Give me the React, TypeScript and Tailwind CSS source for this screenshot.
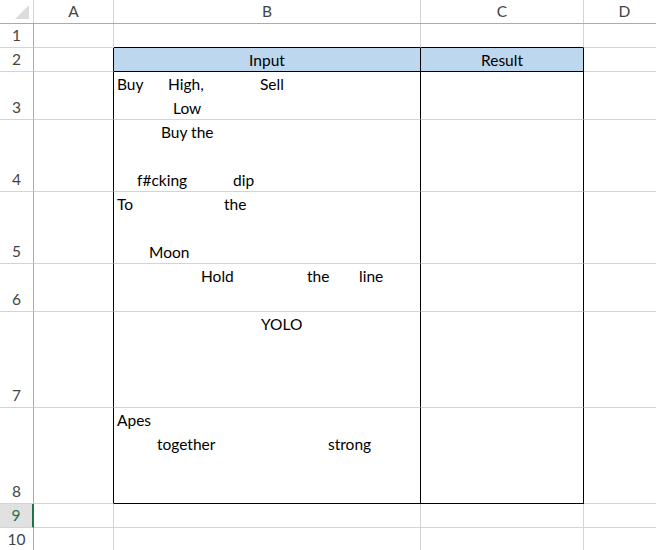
import React from 'react';

type Line = { pl: string; words: { text: string; w: string }[] };

const wcls: Record<string, string> = {
    '51': 'w-[51px]',
    '92': 'w-[92px]',
    '96': 'w-[96px]',
    '106': 'w-[106px]',
    '52': 'w-[52px]',
    '171': 'w-[171px]',
    '107': 'w-[107px]',
    '0': '',
};

const rows = [
    { n: 1, h: 'h-6', lines: [] as Line[] },
    { n: 2, h: 'h-6', lines: [] as Line[], header: true },
    {
        n: 3, h: 'h-12', lines: [
            { pl: 'pl-[3px]', words: [{ text: 'Buy', w: '51' }, { text: 'High,', w: '92' }, { text: 'Sell', w: '0' }] },
            { pl: 'pl-[59px]', words: [{ text: 'Low', w: '0' }] },
        ]
    },
    {
        n: 4, h: 'h-[72px]', lines: [
            { pl: 'pl-[47px]', words: [{ text: 'Buy the', w: '0' }] },
            { pl: '', words: [] },
            { pl: 'pl-[23px]', words: [{ text: 'f#cking', w: '96' }, { text: 'dip', w: '0' }] },
        ]
    },
    {
        n: 5, h: 'h-[72px]', lines: [
            { pl: 'pl-[3px]', words: [{ text: 'To', w: '107' }, { text: 'the', w: '0' }] },
            { pl: '', words: [] },
            { pl: 'pl-[35px]', words: [{ text: 'Moon', w: '0' }] },
        ]
    },
    {
        n: 6, h: 'h-12', lines: [
            { pl: 'pl-[87px]', words: [{ text: 'Hold', w: '106' }, { text: 'the', w: '52' }, { text: 'line', w: '0' }] },
        ]
    },
    {
        n: 7, h: 'h-24', lines: [
            { pl: 'pl-[147px]', words: [{ text: 'YOLO', w: '0' }] },
        ]
    },
    {
        n: 8, h: 'h-24', lines: [
            { pl: 'pl-[3px]', words: [{ text: 'Apes', w: '0' }] },
            { pl: 'pl-[43px]', words: [{ text: 'together', w: '171' }, { text: 'strong', w: '0' }] },
        ]
    },
    { n: 9, h: 'h-6', lines: [] as Line[], active: true },
    { n: 10, h: 'h-6', lines: [] as Line[] },
];

const font = { fontFamily: 'Lato, "Open Sans", sans-serif' };

const App = () => {
    return (
        <div className="w-[656px] h-[550px] overflow-hidden bg-white text-[15.5px] text-black" style={font}>
            {/* column headers */}
            <div className="flex w-[700px] h-6 border-b border-[#ababab]">
                <div className="w-[34px] shrink-0 border-r border-[#d4d4d4] relative">
                    <svg width="16" height="16" className="absolute right-[3px] bottom-[3px]">
                        <polygon points="15,1 15,15 1,15" fill="#dcdcdc" />
                    </svg>
                </div>
                <div className="w-20 shrink-0 border-r border-[#d4d4d4] flex items-center justify-center text-[#444]">A</div>
                <div className="w-[307px] shrink-0 border-r border-[#d4d4d4] flex items-center justify-center text-[#444]">B</div>
                <div className="w-[163px] shrink-0 border-r border-[#d4d4d4] flex items-center justify-center text-[#444]">C</div>
                <div className="w-[82px] shrink-0 border-r border-[#d4d4d4] flex items-center justify-center text-[#444]">D</div>
            </div>

            {rows.map((r) => {
                const inTable = r.n >= 2 && r.n <= 8;
                const bottomBlack = r.n === 1 || r.n === 2 || r.n === 8;
                return (
                    <div key={r.n} className={`flex w-[700px] ${r.h}`}>
                        <div
                            className={`w-[34px] shrink-0 border-b border-[#d4d4d4] flex items-end justify-center pb-[1px] leading-[22px] ${r.active ? 'bg-[#e1e1e1] text-[#217346] border-r-2 border-r-[#217346]' : 'border-r border-r-[#ababab] text-[#444]'}`}
                        >
                            {r.n}
                        </div>
                        <div className={`w-20 shrink-0 border-b border-[#d4d4d4] border-r ${inTable ? 'border-r-black' : 'border-r-[#d4d4d4]'}`} />
                        <div
                            className={`w-[307px] shrink-0 border-r border-b ${inTable ? 'border-r-black' : 'border-r-[#d4d4d4]'} ${bottomBlack ? 'border-b-black' : 'border-b-[#d4d4d4]'} ${r.header ? 'bg-[#bdd7ee] flex items-center justify-center pt-[2px]' : ''}`}
                        >
                            {r.header && <span>Input</span>}
                            {r.lines.map((l, i) => (
                                <div key={i} className={`h-6 pt-[2px] flex items-center whitespace-pre ${l.pl}`}>
                                    {l.words.map((w, j) => (
                                        <span key={j} className={`shrink-0 ${wcls[w.w]}`}>{w.text}</span>
                                    ))}
                                </div>
                            ))}
                        </div>
                        <div
                            className={`w-[163px] shrink-0 border-r border-b ${inTable ? 'border-r-black' : 'border-r-[#d4d4d4]'} ${bottomBlack ? 'border-b-black' : 'border-b-[#d4d4d4]'} ${r.header ? 'bg-[#bdd7ee] flex items-center justify-center pt-[2px]' : ''}`}
                        >
                            {r.header && <span>Result</span>}
                        </div>
                        <div className="w-[82px] shrink-0 border-b border-r border-[#d4d4d4]" />
                    </div>
                );
            })}
        </div>
    );
};

export default App;
